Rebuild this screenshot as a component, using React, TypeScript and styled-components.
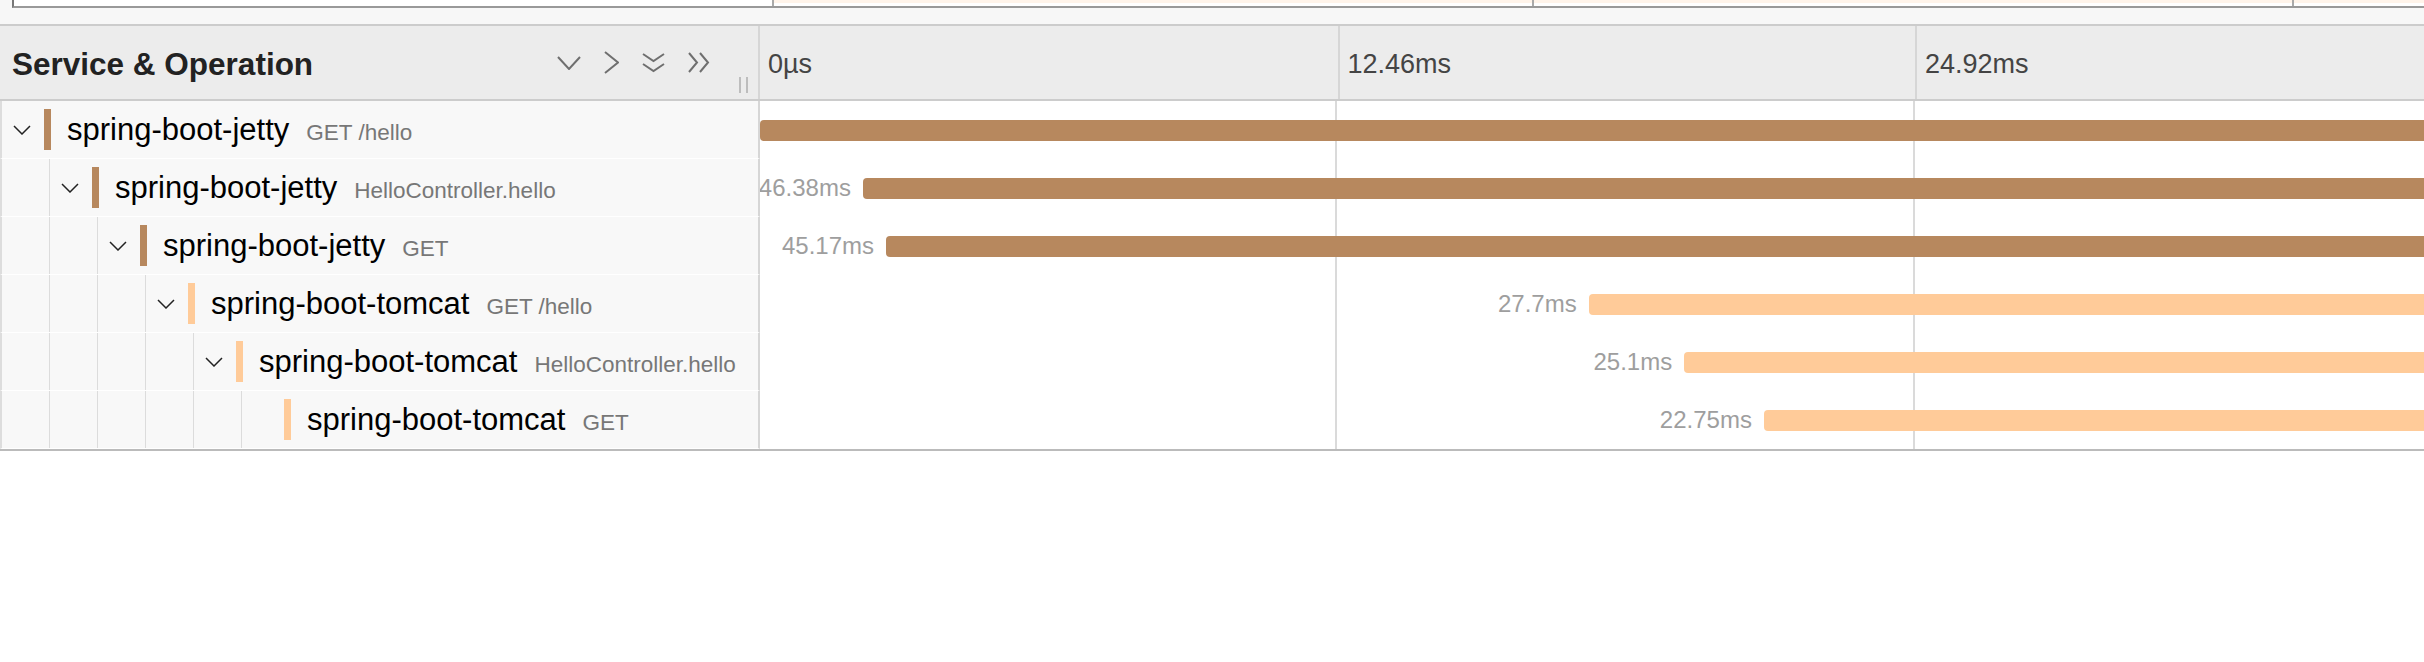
import React from 'react'
import styled, { createGlobalStyle } from 'styled-components'

const GlobalStyle = createGlobalStyle`
  html, body {
    margin: 0;
    padding: 0;
    background: #fff;
    overflow: hidden;
    font-family: 'Liberation Sans', Arial, sans-serif;
  }
`

const BROWN = '#B7885E'
const PEACH = '#FFCB99'

const LEFT_WIDTH = 760
const TICK_WIDTH = 577.5
const TICK_MS = 12.46
const PX_PER_MS = TICK_WIDTH / TICK_MS
const LABEL_GAP = 12

type Span = {
  depth: number
  service: string
  operation: string
  start: number
  duration: number
  color: string
  hasChildren: boolean
}

const spans: Span[] = [
  { depth: 0, service: 'spring-boot-jetty', operation: 'GET /hello', start: 0, duration: 49.84, color: BROWN, hasChildren: true },
  { depth: 1, service: 'spring-boot-jetty', operation: 'HelloController.hello', start: 2.22, duration: 46.38, color: BROWN, hasChildren: true },
  { depth: 2, service: 'spring-boot-jetty', operation: 'GET', start: 2.72, duration: 45.17, color: BROWN, hasChildren: true },
  { depth: 3, service: 'spring-boot-tomcat', operation: 'GET /hello', start: 17.88, duration: 27.7, color: PEACH, hasChildren: true },
  { depth: 4, service: 'spring-boot-tomcat', operation: 'HelloController.hello', start: 19.94, duration: 25.1, color: PEACH, hasChildren: true },
  { depth: 5, service: 'spring-boot-tomcat', operation: 'GET', start: 21.66, duration: 22.75, color: PEACH, hasChildren: false },
]

// the fourth tick (37.38ms) sits past the right edge of the window
const ticks = ['0µs', '12.46ms', '24.92ms', '']

const Page = styled.div`
  width: 100%;
`

const MinimapWrap = styled.div`
  height: 24px;
  padding-left: 12px;
  background: #f7f7f7;
  border-bottom: 2px solid #ccc;
`

const MinimapBox = styled.div`
  display: flex;
  height: 8px;
  box-sizing: border-box;
  background: #fff;
  border-left: 2px solid #777;
  border-bottom: 2px solid #999;
  overflow: hidden;
`

const MinimapSegment = styled.div<{ $tint?: boolean }>`
  flex: 0 0 760px;
  box-sizing: border-box;
  border-right: 2px solid #aaa;
  background: ${p => (p.$tint ? 'linear-gradient(to bottom, #fff4ea 0 3px, #fff 3px)' : '#fff')};
`

const Header = styled.div`
  display: flex;
  height: 73px;
  background: #ececec;
  border-bottom: 2px solid #ccc;
`

const HeaderLeft = styled.div`
  position: relative;
  flex: 0 0 ${LEFT_WIDTH}px;
  box-sizing: border-box;
  display: flex;
  align-items: center;
  padding: 3px 48px 0 12px;
  border-right: 2px solid #d6d6d6;
`

const Title = styled.h3`
  margin: 0;
  font-size: 31.5px;
  font-weight: 700;
  color: #222;
`

const Collapsers = styled.div`
  margin-left: auto;
  margin-top: -3px;
  display: flex;
  align-items: center;
  gap: 23px;
  color: #6f6f6f;
`

const Resizer = styled.div`
  position: absolute;
  right: 10px;
  bottom: 6px;
  width: 5px;
  height: 16px;
  border-left: 2px solid #bdbdbd;
  border-right: 2px solid #bdbdbd;
`

const TickRow = styled.div`
  flex: 1;
  display: flex;
  overflow: hidden;
`

const TickCell = styled.div<{ $first?: boolean }>`
  flex: 0 0 ${TICK_WIDTH}px;
  box-sizing: border-box;
  display: flex;
  align-items: center;
  padding: 3px 0 0 8px;
  border-left: ${p => (p.$first ? 'none' : '2px solid #d6d6d6')};
  font-size: 27px;
  color: #444;
`

const Rows = styled.div`
  border-bottom: 2px solid #bbb;
`

const Row = styled.div`
  display: flex;
  height: 58px;
`

const NameCell = styled.div`
  flex: 0 0 ${LEFT_WIDTH}px;
  box-sizing: border-box;
  display: flex;
  align-items: stretch;
  background: #f8f8f8;
  border-left: 2px solid #ddd;
  border-right: 2px solid #d6d6d6;
  border-bottom: 1px solid #fff;
`

const Indent = styled.div`
  flex: 0 0 48px;
  box-sizing: border-box;
  border-right: 1px solid #dcdcdc;
`

const Toggle = styled.div`
  flex: 0 0 40px;
  display: flex;
  align-items: center;
  justify-content: center;
  color: #222;
`

const ServiceMark = styled.div<{ $color: string }>`
  flex: 0 0 7px;
  align-self: center;
  height: 41px;
  margin-left: 2px;
  background: ${p => p.$color};
`

const NameLine = styled.div`
  display: flex;
  align-items: baseline;
  align-self: center;
  margin-left: 16px;
  white-space: nowrap;
`

const ServiceName = styled.span`
  font-size: 31px;
  color: #000;
`

const OperationName = styled.span`
  margin-left: 17px;
  font-size: 22.5px;
  color: #777;
`

const TimelineCell = styled.div`
  flex: 1;
  display: flex;
  align-items: center;
  overflow: hidden;
  background-color: #fff;
  background-image: repeating-linear-gradient(
    to right,
    transparent 0 ${TICK_WIDTH - 2}px,
    #dadada ${TICK_WIDTH - 2}px ${TICK_WIDTH}px
  );
`

const LabelSlot = styled.div`
  flex: 0 0 auto;
  display: flex;
  justify-content: flex-end;
  box-sizing: border-box;
`

const Duration = styled.span`
  flex: 0 0 auto;
  padding-right: ${LABEL_GAP}px;
  font-size: 24px;
  color: #9e9e9e;
  white-space: nowrap;
`

const Bar = styled.div<{ $color: string }>`
  flex: 0 0 auto;
  height: 21px;
  border-radius: 4px;
  background: ${p => p.$color};
`

const ChevronDown = ({ w = 18, h = 10, sw = 1.5 }: { w?: number; h?: number; sw?: number }) => (
  <svg width={w} height={h} viewBox={`0 0 ${w} ${h}`} fill="none" stroke="currentColor" strokeWidth={sw}>
    <polyline points={`1,1 ${w / 2},${h - 1} ${w - 1},1`} />
  </svg>
)

const ChevronRight = () => (
  <svg width="15" height="23" viewBox="0 0 15 23" fill="none" stroke="currentColor" strokeWidth="2">
    <polyline points="1,1 14,11.5 1,22" />
  </svg>
)

const DoubleDown = () => (
  <svg width="23" height="20" viewBox="0 0 23 20" fill="none" stroke="currentColor" strokeWidth="2">
    <polyline points="1,1 11.5,8 22,1" />
    <polyline points="1,11 11.5,18 22,11" />
  </svg>
)

const DoubleRight = () => (
  <svg width="22" height="21" viewBox="0 0 22 21" fill="none" stroke="currentColor" strokeWidth="2">
    <polyline points="1,1 9,10.5 1,20" />
    <polyline points="12,1 20,10.5 12,20" />
  </svg>
)

const SpanRow = ({ span }: { span: Span }) => {
  const offset = span.start * PX_PER_MS
  const width = span.duration * PX_PER_MS
  return (
    <Row>
      <NameCell>
        {Array.from({ length: span.depth }).map((_, i) => (
          <Indent key={i} />
        ))}
        <Toggle>{span.hasChildren && <ChevronDown />}</Toggle>
        <ServiceMark $color={span.color} />
        <NameLine>
          <ServiceName>{span.service}</ServiceName>
          <OperationName>{span.operation}</OperationName>
        </NameLine>
      </NameCell>
      <TimelineCell>
        <LabelSlot style={{ width: offset }}>
          {offset > 0 && <Duration>{span.duration}ms</Duration>}
        </LabelSlot>
        <Bar $color={span.color} style={{ width }} />
      </TimelineCell>
    </Row>
  )
}

export default function App() {
  return (
    <Page>
      <GlobalStyle />
      <MinimapWrap>
        <MinimapBox>
          <MinimapSegment />
          <MinimapSegment $tint />
          <MinimapSegment $tint />
          <MinimapSegment $tint />
        </MinimapBox>
      </MinimapWrap>
      <Header>
        <HeaderLeft>
          <Title>Service &amp; Operation</Title>
          <Collapsers>
            <ChevronDown w={24} h={14} sw={2} />
            <ChevronRight />
            <DoubleDown />
            <DoubleRight />
          </Collapsers>
          <Resizer />
        </HeaderLeft>
        <TickRow>
          {ticks.map((t, i) => (
            <TickCell key={i} $first={i === 0}>
              {t}
            </TickCell>
          ))}
        </TickRow>
      </Header>
      <Rows>
        {spans.map((s, i) => (
          <SpanRow key={i} span={s} />
        ))}
      </Rows>
    </Page>
  )
}
